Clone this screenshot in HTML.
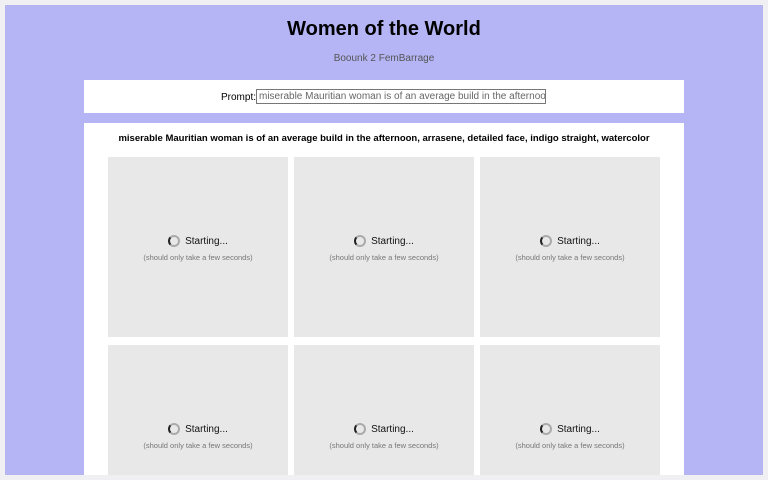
<!DOCTYPE html>
<html><head><style>
html,body{margin:0;padding:0;background:#f0f0f3;width:768px;height:480px;overflow:hidden;font-family:"Liberation Sans",sans-serif}
#bg{position:absolute;left:5px;top:5px;width:758px;height:470px;background:#b5b5f5;overflow:hidden}
h1{position:absolute;left:0;width:758px;top:13px;margin:0;text-align:center;font-size:20px;font-weight:bold;color:#000}
.sub{position:absolute;left:0;width:758px;top:48px;text-align:center;font-size:10px;color:#555}
.pbox{position:absolute;left:79px;top:75px;width:600px;height:33px;background:#fff;font-size:10px}
.pbox span{position:absolute;left:137px;top:12px}
.pbox .inp{position:absolute;left:172px;top:9px;width:286px;height:13px;border:1px solid #777;font-size:10px;color:#666;line-height:13px;white-space:nowrap;overflow:hidden;padding-left:2px}
.main{position:absolute;left:79px;top:118px;width:600px;height:352px;background:#fff;overflow:hidden}
.cap{position:absolute;left:0;width:600px;top:10px;text-align:center;font-size:9.5px;font-weight:bold}
.t{position:absolute;width:180px;height:180px;background:#e8e8e8}
.s{position:absolute;left:0;width:180px;top:78px;text-align:center;font-size:10px;color:#111}
.sp{display:inline-block;box-sizing:border-box;width:12px;height:12px;border:2px solid #aaa;border-left-color:#222;border-radius:50%;vertical-align:-3px;margin-right:5px}
.n{position:absolute;left:0;width:180px;top:96px;text-align:center;font-size:7.5px;color:#777}
</style></head><body>
<div id="bg">
<h1>Women of the World</h1>
<div class="sub">Boounk 2 FemBarrage</div>
<div class="pbox"><span>Prompt:</span><div class="inp">miserable Mauritian woman is of an average build in the afternoon, arrasene</div></div>
<div class="main">
<div class="cap">miserable Mauritian woman is of an average build in the afternoon, arrasene, detailed face, indigo straight, watercolor</div>
<div class="t" style="left:24px;top:34px"><div class="s"><i class="sp"></i>Starting...</div><div class="n">(should only take a few seconds)</div></div>
<div class="t" style="left:210px;top:34px"><div class="s"><i class="sp"></i>Starting...</div><div class="n">(should only take a few seconds)</div></div>
<div class="t" style="left:396px;top:34px"><div class="s"><i class="sp"></i>Starting...</div><div class="n">(should only take a few seconds)</div></div>
<div class="t" style="left:24px;top:222px"><div class="s"><i class="sp"></i>Starting...</div><div class="n">(should only take a few seconds)</div></div>
<div class="t" style="left:210px;top:222px"><div class="s"><i class="sp"></i>Starting...</div><div class="n">(should only take a few seconds)</div></div>
<div class="t" style="left:396px;top:222px"><div class="s"><i class="sp"></i>Starting...</div><div class="n">(should only take a few seconds)</div></div>
</div>
</div>
</body></html>
